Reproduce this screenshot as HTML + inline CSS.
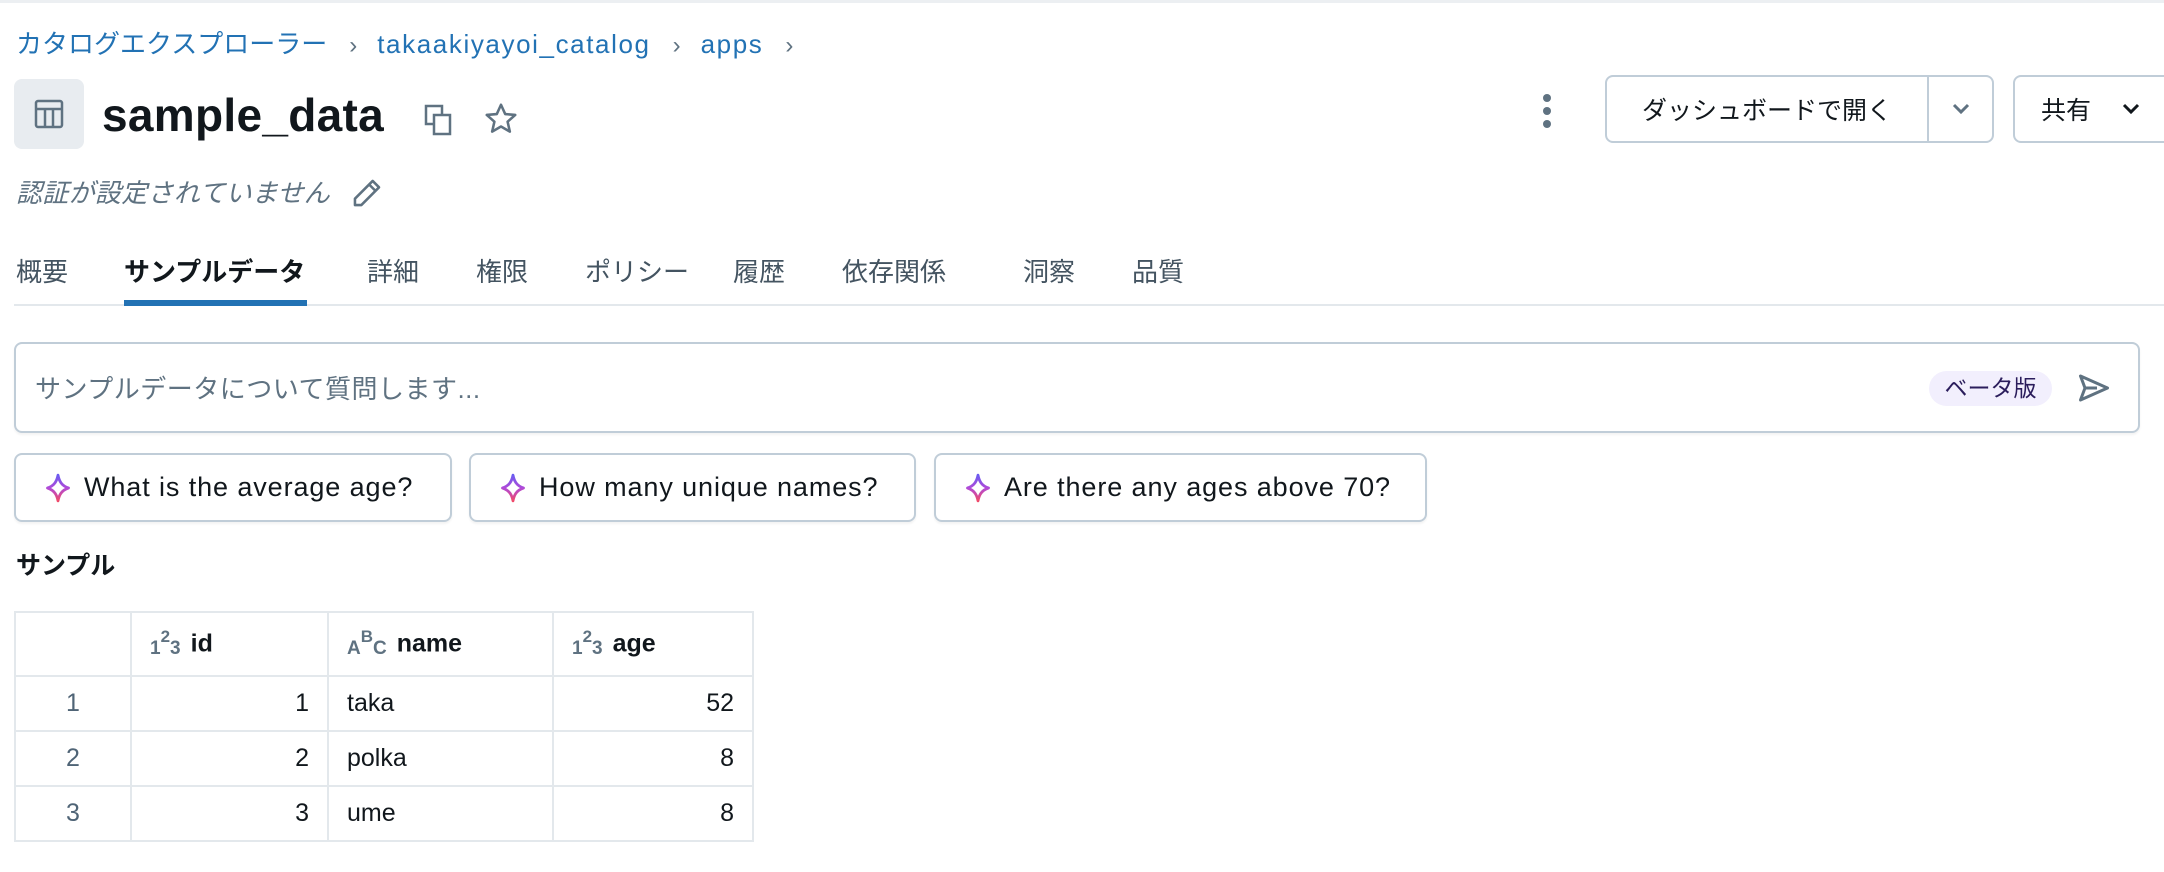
<!DOCTYPE html>
<html><head><meta charset="utf-8"><style>
*{box-sizing:border-box;margin:0;padding:0}
body{width:2164px;height:872px;overflow:hidden;background:#fff;font-family:"Liberation Sans","Noto Sans CJK JP",sans-serif;color:#11171c;position:relative}
.a{position:absolute;white-space:nowrap}
.bc{top:26px;left:16px;font-size:26px;color:#2272b4;line-height:36px}
.bc .s{color:#5f7281;margin:0 20px 0 22px;font-size:24px}
.bc .l{letter-spacing:1.6px}
.btn{position:absolute;border:2px solid #c0cdd8;border-radius:8px;background:#fff;font-size:25px;display:flex;align-items:center}
.tab{top:254px;font-size:26px;line-height:36px;color:#445461}
.chip{position:absolute;top:453px;height:69px;border:2px solid #c0cdd8;border-radius:8px;display:flex;align-items:center;padding-left:28px;font-size:27px;letter-spacing:.9px;color:#11171c;box-shadow:0 2px 2px rgba(0,0,0,.05)}
.chip svg{margin-right:12px}
table{position:absolute;left:14px;top:611px;border-collapse:collapse;font-size:25px}
td{border:2px solid #e3e8ec;padding:0 18px}
tr.h td{height:64px;font-weight:bold}
tr.r td{height:55px}
.num{text-align:right}
.rn{text-align:center;color:#4f6476}
.ti{font-size:19px;color:#5f7281;font-weight:bold;margin-right:10px;position:relative;top:2px}
.ti sup{font-size:17px;position:relative;top:-4px}
</style></head><body>
<div class="a" style="top:0;left:0;width:2164px;height:3px;background:#eceff2"></div>
<div class="a bc">カタログエクスプローラー<span class="s">›</span><span class="l">takaakiyayoi_catalog</span><span class="s">›</span><span class="l">apps</span><span class="s">›</span></div>

<div class="a" style="left:14px;top:79px;width:70px;height:70px;background:#e8ecf0;border-radius:8px"></div>
<svg class="a" style="left:34px;top:99px" width="30" height="30" viewBox="0 0 30 30" fill="none" stroke="#5f7281" stroke-width="2.5"><rect x="2" y="2" width="26" height="26" rx="2"/><path d="M2 10h26M11 10v18M19 10v18"/></svg>
<div class="a" style="left:102px;top:87px;font-size:46px;font-weight:bold;line-height:56px;letter-spacing:.3px">sample_data</div>
<svg class="a" style="left:424px;top:104px" width="30" height="32" viewBox="0 0 30 32" fill="none" stroke="#5f7281" stroke-width="2.5"><rect x="2" y="2" width="16" height="18"/><rect x="10" y="11" width="16" height="19" fill="#fff"/></svg>
<svg class="a" style="left:483px;top:101px" width="36" height="36" viewBox="0 0 24 24" fill="none" stroke="#5f7281" stroke-width="1.7" stroke-linejoin="round"><path d="M12 2.5l2.8 6.2 6.7.6-5.1 4.5 1.5 6.6L12 17l-5.9 3.4 1.5-6.6L2.5 9.3l6.7-.6z"/></svg>

<svg class="a" style="left:1540px;top:92px" width="14" height="38" viewBox="0 0 14 38" fill="#5f7281"><circle cx="7" cy="6" r="4"/><circle cx="7" cy="19" r="4"/><circle cx="7" cy="32" r="4"/></svg>
<div class="btn" style="left:1605px;top:75px;width:389px;height:68px;">
<span style="width:320px;text-align:center">ダッシュボードで開く</span>
<span style="width:2px;height:64px;background:#c0cdd8"></span>
<svg style="margin-left:22px" width="20" height="14" viewBox="0 0 20 14" fill="none" stroke="#5f7281" stroke-width="3"><path d="M3 3l7 7 7-7"/></svg>
</div>
<div class="btn" style="left:2013px;top:75px;width:170px;height:68px;padding-left:26px">共有
<svg style="margin-left:30px" width="20" height="14" viewBox="0 0 20 14" fill="none" stroke="#11171c" stroke-width="3"><path d="M3 3l7 7 7-7"/></svg></div>

<div class="a" style="left:16px;top:175px;font-size:26px;font-style:italic;color:#5f7281;line-height:36px;letter-spacing:.3px">認証が設定されていません</div>
<svg class="a" style="left:350px;top:176px" width="34" height="34" viewBox="0 0 24 24" fill="none" stroke="#5f7281" stroke-width="1.8" stroke-linejoin="round"><path d="M16 3.5l4.5 4.5L8 20.5H3.5V16z M13.5 6l4.5 4.5"/></svg>

<div class="a tab" style="left:16px">概要</div>
<div class="a tab" style="left:124px;color:#11171c;font-weight:bold">サンプルデータ</div>
<div class="a tab" style="left:367px">詳細</div>
<div class="a tab" style="left:476px">権限</div>
<div class="a tab" style="left:585px">ポリシー</div>
<div class="a tab" style="left:733px">履歴</div>
<div class="a tab" style="left:842px">依存関係</div>
<div class="a tab" style="left:1023px">洞察</div>
<div class="a tab" style="left:1132px">品質</div>
<div class="a" style="left:14px;top:304px;width:2150px;height:2px;background:#e3e8ec"></div>
<div class="a" style="left:124px;top:300px;width:183px;height:6px;background:#2272b4"></div>

<div class="a" style="left:14px;top:342px;width:2126px;height:91px;border:2px solid #c0cdd8;border-radius:8px;box-shadow:0 2px 2px rgba(0,0,0,.05)"></div>
<div class="a" style="left:35px;top:371px;font-size:26px;color:#5f7281;line-height:36px;letter-spacing:.5px">サンプルデータについて質問します...</div>
<div class="a" style="left:1929px;top:371px;width:123px;height:35px;border-radius:18px;background:#f2effd;color:#2b1d5c;font-size:23px;line-height:35px;text-align:center">ベータ版</div>
<svg class="a" style="left:2076px;top:370px" width="36" height="36" viewBox="0 0 24 24" fill="none" stroke="#5f7281" stroke-width="2" stroke-linejoin="round"><path d="M3 4l18 8-18 8 3-8z M6 12h8"/></svg>

<svg width="0" height="0" style="position:absolute"><defs><linearGradient id="g" x1="0" y1="0" x2="0" y2="1"><stop offset="0" stop-color="#6a5cf0"/><stop offset=".5" stop-color="#b04ad8"/><stop offset="1" stop-color="#f04a6a"/></linearGradient></defs></svg>
<div class="chip" style="left:14px;width:438px">
<svg width="28" height="32" viewBox="0 0 24 26" fill="none" stroke="url(#g)" stroke-width="2.4" stroke-linejoin="round"><path d="M12 2c1 5 3 9 9 11-6 2-8 6-9 11-1-5-3-9-9-11 6-2 8-6 9-11z"/></svg>What is the average age?</div>
<div class="chip" style="left:469px;width:447px">
<svg width="28" height="32" viewBox="0 0 24 26" fill="none" stroke="url(#g)" stroke-width="2.4" stroke-linejoin="round"><path d="M12 2c1 5 3 9 9 11-6 2-8 6-9 11-1-5-3-9-9-11 6-2 8-6 9-11z"/></svg>How many unique names?</div>
<div class="chip" style="left:934px;width:493px">
<svg width="28" height="32" viewBox="0 0 24 26" fill="none" stroke="url(#g)" stroke-width="2.4" stroke-linejoin="round"><path d="M12 2c1 5 3 9 9 11-6 2-8 6-9 11-1-5-3-9-9-11 6-2 8-6 9-11z"/></svg>Are there any ages above 70?</div>

<div class="a" style="left:16px;top:548px;font-size:25px;font-weight:bold;line-height:36px">サンプル</div>

<table>
<tr class="h"><td style="width:116px"></td><td style="width:197px"><span class="ti">1<sup>2</sup>3</span>id</td><td style="width:225px"><span class="ti">A<sup>B</sup>C</span>name</td><td style="width:200px"><span class="ti">1<sup>2</sup>3</span>age</td></tr>
<tr class="r"><td class="rn">1</td><td class="num">1</td><td>taka</td><td class="num">52</td></tr>
<tr class="r"><td class="rn">2</td><td class="num">2</td><td>polka</td><td class="num">8</td></tr>
<tr class="r"><td class="rn">3</td><td class="num">3</td><td>ume</td><td class="num">8</td></tr>
</table>
</body></html>
